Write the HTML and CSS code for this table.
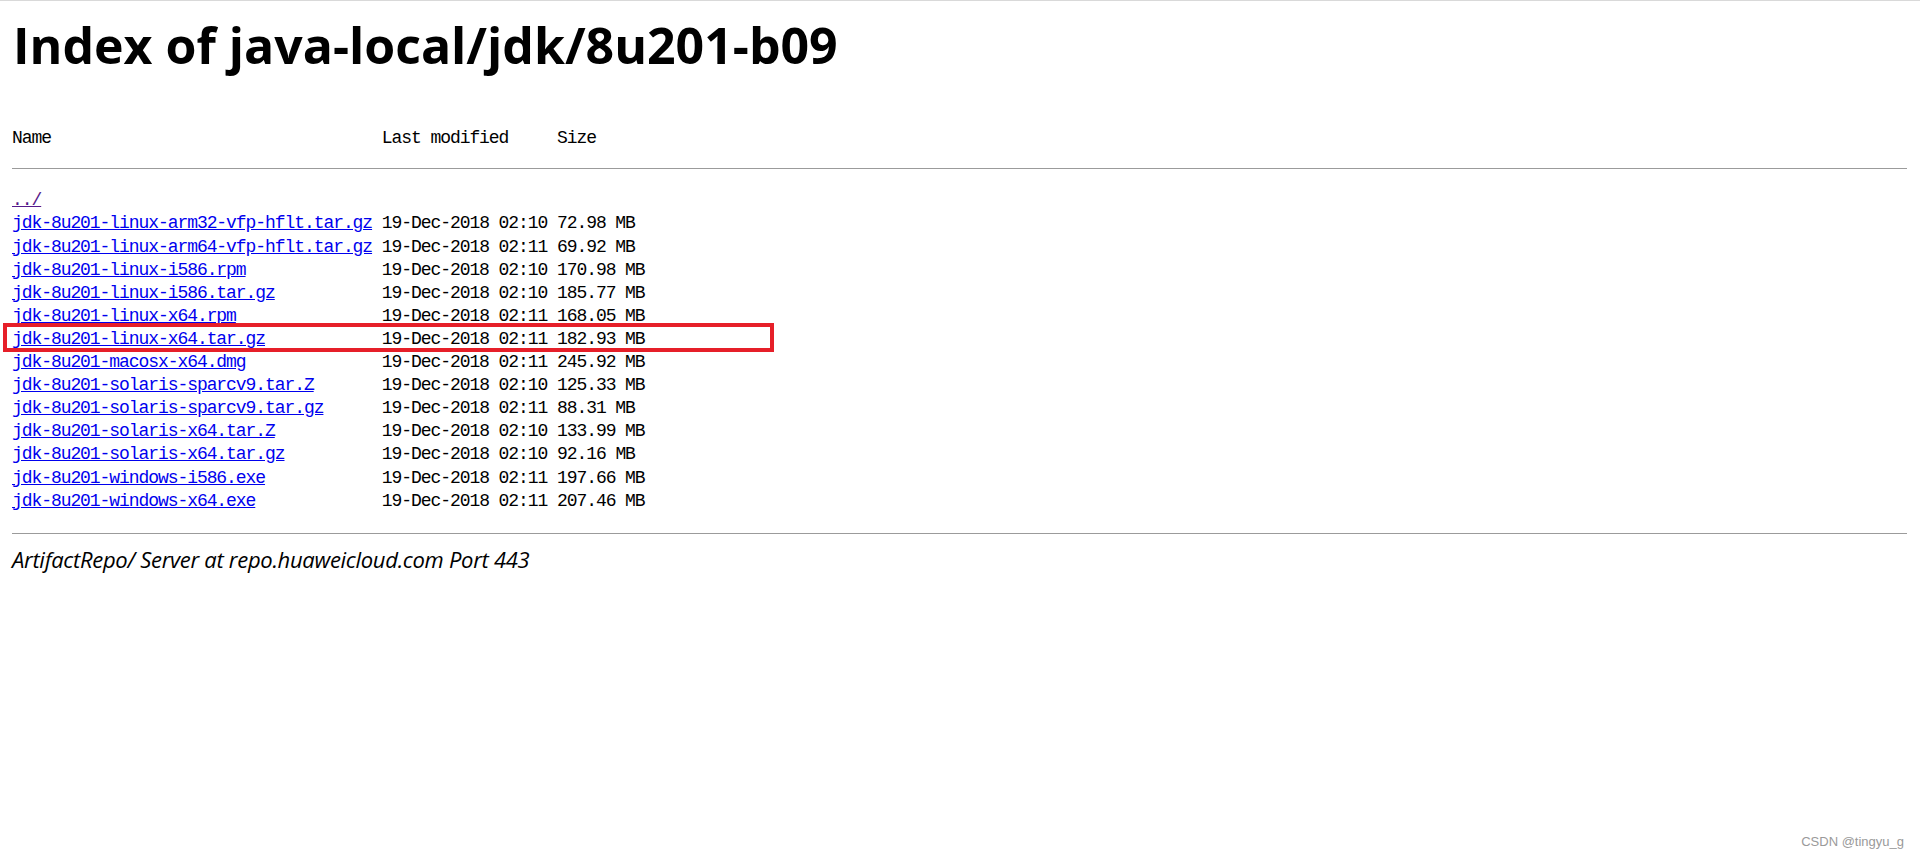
FILE: index.html
```html
<!DOCTYPE html>
<html>
<head>
<meta charset="utf-8">
<title>Index of java-local/jdk/8u201-b09</title>
<link rel="stylesheet" href="styles.css">
</head>
<body>
<div class="topline"></div>
<main class="page">
<h1 class="title">Index of java-local/jdk/8u201-b09</h1>
<div class="listing head"><div class="line">Name                                  Last modified     Size</div></div>
<hr class="rule rule-top">
<div class="listing"><div class="line"><a class="visited" href="#">../</a></div><div class="line"><a href="#">jdk-8u201-linux-arm32-vfp-hflt.tar.gz</a> 19-Dec-2018 02:10 72.98 MB</div><div class="line"><a href="#">jdk-8u201-linux-arm64-vfp-hflt.tar.gz</a> 19-Dec-2018 02:11 69.92 MB</div><div class="line"><a href="#">jdk-8u201-linux-i586.rpm</a>              19-Dec-2018 02:10 170.98 MB</div><div class="line"><a href="#">jdk-8u201-linux-i586.tar.gz</a>           19-Dec-2018 02:10 185.77 MB</div><div class="line"><a href="#">jdk-8u201-linux-x64.rpm</a>               19-Dec-2018 02:11 168.05 MB</div><div class="line marked"><a href="#">jdk-8u201-linux-x64.tar.gz</a>            19-Dec-2018 02:11 182.93 MB</div><div class="line"><a href="#">jdk-8u201-macosx-x64.dmg</a>              19-Dec-2018 02:11 245.92 MB</div><div class="line"><a href="#">jdk-8u201-solaris-sparcv9.tar.Z</a>       19-Dec-2018 02:10 125.33 MB</div><div class="line"><a href="#">jdk-8u201-solaris-sparcv9.tar.gz</a>      19-Dec-2018 02:11 88.31 MB</div><div class="line"><a href="#">jdk-8u201-solaris-x64.tar.Z</a>           19-Dec-2018 02:10 133.99 MB</div><div class="line"><a href="#">jdk-8u201-solaris-x64.tar.gz</a>          19-Dec-2018 02:10 92.16 MB</div><div class="line"><a href="#">jdk-8u201-windows-i586.exe</a>            19-Dec-2018 02:11 197.66 MB</div><div class="line"><a href="#">jdk-8u201-windows-x64.exe</a>             19-Dec-2018 02:11 207.46 MB</div></div>
<hr class="rule rule-bottom">
<address class="server">ArtifactRepo/ Server at repo.huaweicloud.com Port 443</address>
</main>
<div class="watermark">CSDN @tingyu_g</div>
</body>
</html>
```
FILE: styles.css
```css
html, body {
  margin: 0;
  padding: 0;
  background: #ffffff;
  height: 100%;
}
body {
  position: relative;
  overflow: hidden;
  color: #000;
}
.topline {
  height: 1px;
  background: #d9d9d9;
}
.page {
  padding: 0 13px 0 12px;
}
.title {
  margin: 14px 0 0 0;
  font-family: "Open Sans", "Noto Sans", sans-serif;
  font-weight: 700;
  font-size: 50px;
  line-height: 60px;
  letter-spacing: 0;
  padding-left: 1px;
}
.listing {
  font-family: "Liberation Mono", monospace;
  font-size: 18px;
  letter-spacing: -1.07px;
  line-height: 23.1px;
  white-space: pre;
}
.head {
  margin-top: 52.4px;
}
.line {
  height: 23.1px;
}
.listing a {
  color: #0000ee;
  text-decoration: underline;
}
.listing a.visited {
  color: #551a8b;
}
.rule {
  border: 0;
  border-top: 1px solid #9b9b9b;
  height: 0;
  margin: 0;
}
.rule-top {
  margin-top: 17.5px;
  margin-bottom: 20.4px;
}
.rule-bottom {
  margin-top: 20px;
}
.marked {
  position: relative;
}
.marked::after {
  content: "";
  position: absolute;
  left: -9px;
  top: -5px;
  width: 771px;
  height: 29px;
  border: 4px solid #e61f29;
  box-sizing: border-box;
}
.server {
  margin-top: 11px;
  font-family: "Open Sans", "Noto Sans", sans-serif;
  font-style: italic;
  font-size: 22px;
  line-height: 28px;
  letter-spacing: -0.3px;
}
.watermark {
  position: absolute;
  right: 16px;
  bottom: 8px;
  font-family: "Liberation Sans", Arial, sans-serif;
  font-size: 13px;
  color: #9a9a9a;
}
```
